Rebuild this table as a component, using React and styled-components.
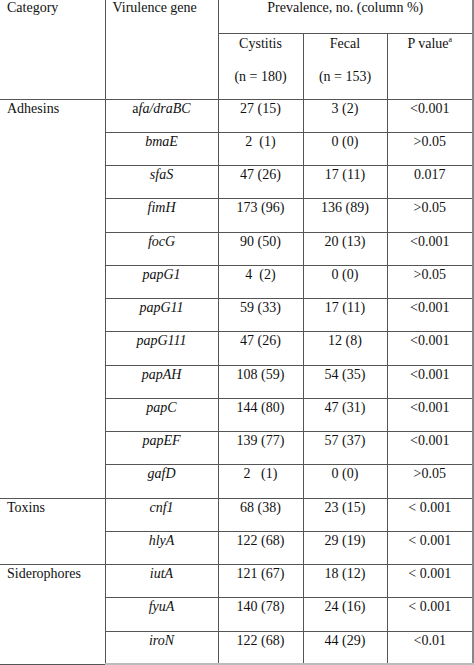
import React from 'react';
import styled, {createGlobalStyle} from 'styled-components';

const GlobalStyle = createGlobalStyle`
  html, body {
    margin: 0;
    padding: 0;
    background: #fff;
  }
  body {
    font-family: "Liberation Serif", "Times New Roman", serif;
    color: #111;
  }
`;

const Table = styled.table`
  border-collapse: collapse;
  table-layout: fixed;
  width: 473px;
  font-family: "Liberation Serif", "Times New Roman", serif;
  font-size: 14px;
  line-height: 16px;
  color: #111;
`;

const Row = styled.tr`
  height: ${p => p.$h || 33.25}px;
`;

const Cell = styled.td`
  border: 1px solid #555;
  vertical-align: top;
  padding: 1px 0 0 0;
  text-align: center;
  font-style: ${p => (p.$italic ? 'italic' : 'normal')};
  white-space: pre;

  &:first-child {
    border-left: none;
  }

  &:last-child {
    border-right: 2px solid #888;
  }
`;

const HeadCell = styled(Cell).attrs({as: 'th'})`
  font-weight: normal;
  padding-top: 0;
  border-top: none;
  text-align: ${p => (p.$left ? 'left' : 'center')};
  padding-left: ${p => (p.$left ? '7px' : '0')};
`;

const SubHeadCell = styled(Cell).attrs({as: 'th'})`
  font-weight: normal;
  padding-top: 2px;
`;

const CategoryCell = styled(Cell)`
  text-align: left;
  padding-left: 7px;
  border-left: none;
`;

const SubLine = styled.span`
  display: block;

  & + & {
    margin-top: 17px;
  }
`;

const Upright = styled.span`
  font-style: normal;
`;

const Sup = styled.sup`
  font-size: 8px;
  line-height: 0;
  vertical-align: 6px;
`;

const Body = styled.tbody`
  tr:last-child td {
    border-bottom: 2px solid #bbb;
  }
`;

const groups = [
  {
    name: 'Adhesins',
    rows: [
      [<><Upright>a</Upright>fa/draBC</>, '27 (15)', '3 (2)', '<0.001'],
      ['bmaE', '2  (1)', '0 (0)', '>0.05'],
      ['sfaS', '47 (26)', '17 (11)', '0.017'],
      ['fimH', '173 (96)', '136 (89)', '>0.05'],
      ['focG', '90 (50)', '20 (13)', '<0.001'],
      ['papG1', '4  (2)', '0 (0)', '>0.05'],
      ['papG11', '59 (33)', '17 (11)', '<0.001'],
      ['papG111', '47 (26)', '12 (8)', '<0.001'],
      ['papAH', '108 (59)', '54 (35)', '<0.001'],
      ['papC', '144 (80)', '47 (31)', '<0.001'],
      ['papEF', '139 (77)', '57 (37)', '<0.001'],
      ['gafD', '2   (1)', '0 (0)', '>0.05'],
    ],
  },
  {
    name: 'Toxins',
    rows: [
      ['cnf1', '68 (38)', '23 (15)', '< 0.001'],
      ['hlyA', '122 (68)', '29 (19)', '< 0.001'],
    ],
  },
  {
    name: 'Siderophores',
    rows: [
      ['iutA', '121 (67)', '18 (12)', '< 0.001'],
      ['fyuA', '140 (78)', '24 (16)', '< 0.001'],
      ['iroN', '122 (68)', '44 (29)', '<0.01'],
    ],
  },
];

export default function App() {
  return (
    <>
      <GlobalStyle />
      <Table>
        <colgroup>
          <col style={{width: 105}} />
          <col style={{width: 113}} />
          <col style={{width: 85}} />
          <col style={{width: 84}} />
          <col style={{width: 86}} />
        </colgroup>
        <thead>
          <Row $h={33}>
            <HeadCell rowSpan={2} $left>Category</HeadCell>
            <HeadCell rowSpan={2} $left>Virulence gene</HeadCell>
            <HeadCell colSpan={3}>Prevalence, no. (column %)</HeadCell>
          </Row>
          <Row $h={66}>
            <SubHeadCell>
              <SubLine>Cystitis</SubLine>
              <SubLine>(n = 180)</SubLine>
            </SubHeadCell>
            <SubHeadCell>
              <SubLine>Fecal</SubLine>
              <SubLine>(n = 153)</SubLine>
            </SubHeadCell>
            <SubHeadCell>
              P value<Sup>a</Sup>
            </SubHeadCell>
          </Row>
        </thead>
        <Body>
          {groups.map(g =>
            g.rows.map((r, i) => (
              <Row key={g.name + i}>
                {i === 0 && <CategoryCell rowSpan={g.rows.length}>{g.name}</CategoryCell>}
                <Cell $italic>{r[0]}</Cell>
                <Cell>{r[1]}</Cell>
                <Cell>{r[2]}</Cell>
                <Cell>{r[3]}</Cell>
              </Row>
            ))
          )}
        </Body>
      </Table>
    </>
  );
}
